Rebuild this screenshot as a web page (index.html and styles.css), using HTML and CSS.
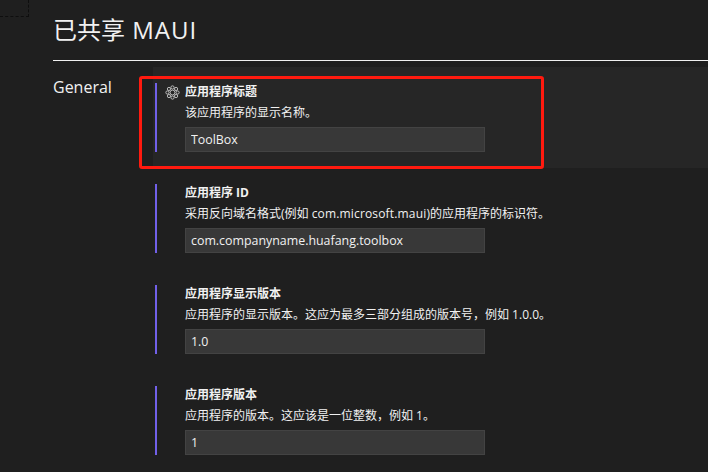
FILE: index.html
```html
<!DOCTYPE html>
<html lang="zh-CN">
<head>
    <meta charset="UTF-8" />
    <meta name="viewport" content="width=device-width, initial-scale=1.0" />
    <title>已共享 MAUI</title>
    <link rel="stylesheet" href="styles.css">
</head>
<body>

<div class="corner"></div>

<div class="page">
    <h1 class="page-title">已共享 <span class="title-latin">MAUI</span></h1>

    <div class="section">
        <div class="section-name">General</div>
        <div class="rows">
            <div class="row row-active">
                <svg class="gear" viewBox="0 0 16 16" fill="none" stroke="#c4c4c4" stroke-width="1">
                    <circle cx="8" cy="2.6" r="1.7"/>
                    <circle cx="11.8" cy="4.2" r="1.7"/>
                    <circle cx="13.4" cy="8" r="1.7"/>
                    <circle cx="11.8" cy="11.8" r="1.7"/>
                    <circle cx="8" cy="13.4" r="1.7"/>
                    <circle cx="4.2" cy="11.8" r="1.7"/>
                    <circle cx="2.6" cy="8" r="1.7"/>
                    <circle cx="4.2" cy="4.2" r="1.7"/>
                    <circle cx="8" cy="8" r="2.6"/>
                </svg>
                <div class="row-body">
                    <div class="row-title">应用程序标题</div>
                    <div class="row-desc">该应用程序的显示名称。</div>
                    <input class="row-input" type="text" value="ToolBox" readonly />
                </div>
            </div>

            <div class="row">
                <div class="row-body">
                    <div class="row-title">应用程序 ID</div>
                    <div class="row-desc">采用反向域名格式(例如 <span class="desc-latin">com.microsoft.maui</span>)的应用程序的标识符。</div>
                    <input class="row-input" type="text" value="com.companyname.huafang.toolbox" readonly />
                </div>
            </div>

            <div class="row">
                <div class="row-body">
                    <div class="row-title">应用程序显示版本</div>
                    <div class="row-desc">应用程序的显示版本。这应为最多三部分组成的版本号，例如 1.0.0。</div>
                    <input class="row-input" type="text" value="1.0" readonly />
                </div>
            </div>

            <div class="row">
                <div class="row-body">
                    <div class="row-title">应用程序版本</div>
                    <div class="row-desc">应用程序的版本。这应该是一位整数，例如 1。</div>
                    <input class="row-input" type="text" value="1" readonly />
                </div>
            </div>
        </div>
    </div>
</div>

<!-- 红色标注框 -->
<div class="callout"></div>

</body>
</html>
```

FILE: styles.css
```css
html, body {
    margin: 0;
    height: 100%;
    overflow: hidden;
}

body {
    position: relative;
    background-color: #1f1f1f;
    color: #f1f1f1;
    font-family: "Open Sans", "Noto Sans CJK SC", sans-serif;
    font-size: 12px;
}

.corner {
    position: absolute;
    left: 0;
    top: 0;
    width: 28px;
    height: 16px;
    border-right: 1px dashed #0e0e0e;
    border-bottom: 1px dashed #0e0e0e;
}

.page {
    padding-left: 53px;
}

.page-title {
    margin: 0;
    height: 61px;
    box-sizing: border-box;
    padding-top: 12px;
    border-bottom: 1px solid #f1f1f1;
    font-size: 24px;
    line-height: 35px;
    font-weight: 400;
}

.title-latin {
    margin-left: 1px;
    letter-spacing: 1px;
}

.section {
    display: flex;
    padding-top: 6px;
}

.section-name {
    width: 100px;
    flex: none;
    padding-top: 9px;
    font-size: 16px;
    line-height: 22px;
}

.rows {
    flex: 1;
}

.row {
    position: relative;
    height: 101px;
    box-sizing: border-box;
    padding: 16px 0 16px 2px;
}

.row-active {
    background-color: #262626;
}

.row-body {
    height: 69px;
    box-sizing: border-box;
    padding-left: 28px;
    border-left: 2px solid #7160e8;
}

.row-title {
    height: 18px;
    line-height: 18px;
    font-weight: 700;
}

.row-desc {
    height: 26px;
    line-height: 24px;
    white-space: nowrap;
}

.desc-latin {
    letter-spacing: .16px;
}

.row-input {
    display: block;
    width: 300px;
    height: 25px;
    box-sizing: border-box;
    padding: 0 5px;
    border: 1px solid #434343;
    background-color: #383838;
    color: #f1f1f1;
    font-family: inherit;
    font-size: 12.4px;
    outline: none;
}

.gear {
    position: absolute;
    left: 12px;
    top: 18px;
    width: 15px;
    height: 15px;
}

.callout {
    position: absolute;
    left: 139px;
    top: 76px;
    width: 405px;
    height: 93px;
    box-sizing: border-box;
    border: 3px solid #ff1a0f;
    border-radius: 3px;
}
```
